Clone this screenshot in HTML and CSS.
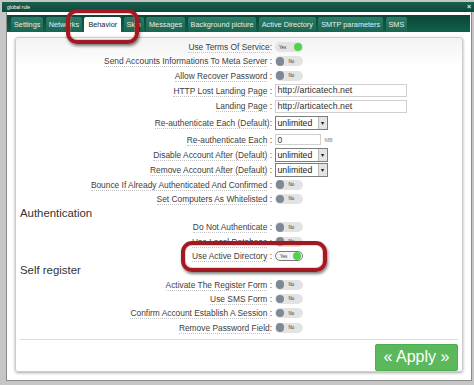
FILE: index.html
```html
<!DOCTYPE html>
<html>
<head>
<meta charset="utf-8">
<title>global rule</title>
<link rel="stylesheet" href="styles.css">
</head>
<body>
<div class="titlebar"><span class="title">global rule</span><span class="close">×</span></div>
<div class="window">
  <div class="tabbar">
    <span class="tab">Settings</span>
    <span class="tab">Networks</span>
    <span class="tab active">Behavior</span>
    <span class="tab">Skin</span>
    <span class="tab">Messages</span>
    <span class="tab">Background picture</span>
    <span class="tab">Active Directory</span>
    <span class="tab">SMTP parameters</span>
    <span class="tab">SMS</span>
  </div>
  <div class="card">
    <div class="row"><span class="lbl"><span class="u">Use Terms Of Service</span>:</span><span class="toggle on"><span class="tt">Yes</span><span class="knob"></span></span></div>
    <div class="row"><span class="lbl"><span class="u">Send Accounts Informations To Meta Server</span> :</span><span class="toggle"><span class="knob"></span><span class="tt">No</span></span></div>
    <div class="row"><span class="lbl"><span class="u">Allow Recover Password</span> :</span><span class="toggle"><span class="knob"></span><span class="tt">No</span></span></div>
    <div class="row inp"><span class="lbl"><span class="u">HTTP Lost Landing Page</span> :</span><span class="input">http://articatech.net</span></div>
    <div class="row inp"><span class="lbl"><span class="u">Landing Page</span> :</span><span class="input">http://articatech.net</span></div>
    <div class="row sel first"><span class="lbl"><span class="u">Re-authenticate Each (Default)</span>:</span><span class="select"><span class="sel-val">unlimited</span><span class="sel-btn">▾</span></span></div>
    <div class="row inp"><span class="lbl"><span class="u">Re-authenticate Each</span> :</span><span class="ctl"><span class="input small">0</span><span class="unit">MB</span></span></div>
    <div class="row sel"><span class="lbl"><span class="u">Disable Account After (Default)</span> :</span><span class="select"><span class="sel-val">unlimited</span><span class="sel-btn">▾</span></span></div>
    <div class="row sel"><span class="lbl"><span class="u">Remove Account After (Default)</span> :</span><span class="select"><span class="sel-val">unlimited</span><span class="sel-btn">▾</span></span></div>
    <div class="row"><span class="lbl"><span class="u">Bounce If Already Authenticated And Confirmed</span> :</span><span class="toggle"><span class="knob"></span><span class="tt">No</span></span></div>
    <div class="row"><span class="lbl"><span class="u">Set Computers As Whitelisted</span> :</span><span class="toggle"><span class="knob"></span><span class="tt">No</span></span></div>
    <div class="head">Authentication</div>
    <div class="row"><span class="lbl"><span class="u">Do Not Authenticate</span> :</span><span class="toggle"><span class="knob"></span><span class="tt">No</span></span></div>
    <div class="row"><span class="lbl"><span class="u">Use Local Database</span> :</span><span class="toggle"><span class="knob"></span><span class="tt">No</span></span></div>
    <div class="row"><span class="lbl"><span class="u">Use Active Directory</span> :</span><span class="toggle on focus"><span class="tt">Yes</span><span class="knob"></span></span></div>
    <div class="head">Self register</div>
    <div class="row"><span class="lbl"><span class="u">Activate The Register Form</span> :</span><span class="toggle"><span class="knob"></span><span class="tt">No</span></span></div>
    <div class="row"><span class="lbl"><span class="u">Use SMS Form</span> :</span><span class="toggle"><span class="knob"></span><span class="tt">No</span></span></div>
    <div class="row"><span class="lbl"><span class="u">Confirm Account Establish A Session</span> :</span><span class="toggle"><span class="knob"></span><span class="tt">No</span></span></div>
    <div class="row"><span class="lbl"><span class="u">Remove Password Field</span>:</span><span class="toggle"><span class="knob"></span><span class="tt">No</span></span></div>
    <div class="sep"></div>
    <div class="apply-row"><button class="apply">« Apply »</button></div>
  </div>
</div>
<div class="mark mark1"></div>
<div class="mark mark2"></div>
</body>
</html>
```
FILE: styles.css
```css
* { box-sizing: border-box; }
html, body { margin: 0; padding: 0; }
body {
  width: 474px;
  height: 385px;
  overflow: hidden;
  position: relative;
  background: #c6c6c6;
  font-family: "Liberation Sans", Arial, sans-serif;
  color: #333;
}
.titlebar {
  height: 10px;
  margin: 2px 0 0 2px;
  padding: 0 3px 0 5px;
  background: linear-gradient(#1b5f4e, #0c4a3b);
  display: flex;
  align-items: center;
  justify-content: space-between;
  color: #fff;
}
.title { font-size: 5px; line-height: 10px; }
.close { font-size: 7px; font-weight: bold; line-height: 10px; color: #e8f0ee; }
.window {
  margin: 0 2px 0 6px;
  border: 1px solid #8a8a8a;
  border-top: 0;
  background: #fff;
  padding: 3px 0 8px 0;
}
.tabbar {
  height: 17px;
  margin-right: 1px;
  padding-left: 4px;
  display: flex;
  align-items: flex-end;
  gap: 2.3px;
  background: linear-gradient(#0a4536, #10604b);
}
.tab {
  height: 15px;
  padding: 0 3px;
  font-size: 7.3px;
  line-height: 15px;
  color: #e4eeeb;
  background: linear-gradient(#2b7d67, #196551);
  border-radius: 2px 2px 0 0;
  white-space: nowrap;
}
.tab.active { background: #fff; color: #222; padding: 0 4px; }
.card {
  margin: 5px 8px 0 8px;
  border: 1px solid #cdcdcd;
  border-radius: 3px;
  box-shadow: 0 1px 3px rgba(0,0,0,0.35);
  background: linear-gradient(#f2f2f2, #fff 28px);
  padding: 2px 4px 0 4px;
}
.row {
  display: grid;
  grid-template-columns: 252px 1fr;
  column-gap: 2.5px;
  align-items: center;
  height: 14.3px;
}
.row.inp { height: 15.5px; }
.row.sel { height: 15px; }
.row.sel.first { height: 18px; }
.lbl {
  text-align: right;
  font-size: 8.4px;
  color: #404040;
  white-space: nowrap;
}
.u { border-bottom: 1px dotted #c4c4c4; }
.head {
  height: 14.3px;
  font-size: 11.4px;
  line-height: 14.3px;
  color: #333;
}
.toggle {
  width: 28.5px;
  height: 10px;
  border-radius: 5px;
  background: #e3e3e3;
  display: flex;
  align-items: center;
}
.knob {
  width: 8.5px;
  height: 8.5px;
  border-radius: 50%;
  background: #7e8995;
  margin-left: 1px;
}
.tt {
  font-size: 4.5px;
  color: #333;
  margin-left: 4.5px;
}
.toggle.on .knob {
  background: #4fd34a;
  margin-left: auto;
  margin-right: 1px;
}
.toggle.focus { border: 1px solid #7a7a7a; background: #f4f4f4; }
.input {
  display: block;
  width: 132px;
  height: 13px;
  border: 1px solid #cfcfcf;
  background: #fff;
  font-size: 8.8px;
  line-height: 11px;
  padding-left: 2px;
  color: #333;
}
.ctl { display: flex; align-items: center; }
.input.small { width: 46px; height: 11.5px; line-height: 10px; font-size: 8.5px; }
.unit { font-size: 5.5px; color: #888; margin-left: 4px; }
.select {
  display: flex;
  width: 53px;
  height: 14px;
  border: 1px solid #7c7c7c;
  background: #fff;
}
.sel-val {
  flex: 1;
  font-size: 8.7px;
  line-height: 12px;
  padding-left: 2px;
  color: #222;
}
.sel-btn {
  width: 9px;
  border-left: 1px solid #b8b8b8;
  background: #e4e4e4;
  font-size: 6px;
  line-height: 12px;
  text-align: center;
  color: #111;
}
.sep { height: 1px; background: #dcdcdc; margin-top: 4.3px; }
.apply-row { display: flex; justify-content: flex-end; margin-top: 4px; }
.apply {
  width: 83px;
  height: 27px;
  margin: 0;
  padding: 0;
  background: #5cb85c;
  border: 1px solid #4cae4c;
  border-radius: 2px;
  color: #fff;
  font-family: "Liberation Sans", Arial, sans-serif;
  font-size: 16px;
}
.mark {
  position: absolute;
  border: 4px solid #a21a21;
  border-radius: 11px;
  box-shadow: 1px 2px 3px rgba(0,0,0,0.5), inset 0 0 0 1px rgba(255,110,110,0.35);
}
.mark1 { left: 66px; top: 9px; width: 73px; height: 35px; }
.mark2 { left: 181px; top: 241px; width: 146px; height: 31px; }
```
